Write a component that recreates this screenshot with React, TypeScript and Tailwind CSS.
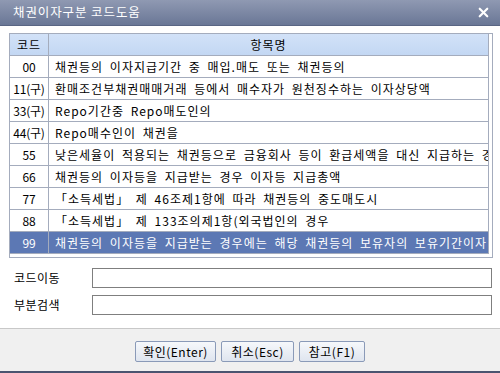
import { X } from 'lucide-react'

const rows = [
  { code: '00', name: '채권등의 이자지급기간 중 매입.매도 또는 채권등의' },
  { code: '11(구)', name: '환매조건부채권매매거래 등에서 매수자가 원천징수하는 이자상당액' },
  { code: '33(구)', name: 'Repo기간중 Repo매도인의' },
  { code: '44(구)', name: 'Repo매수인이 채권을' },
  { code: '55', name: '낮은세율이 적용되는 채권등으로 금융회사 등이 환급세액을 대신 지급하는 경우' },
  { code: '66', name: '채권등의 이자등을 지급받는 경우 이자등 지급총액' },
  { code: '77', name: '「소득세법」 제 46조제1항에 따라 채권등의 중도매도시' },
  { code: '88', name: '「소득세법」 제 133조의제1항(외국법인의 경우' },
  { code: '99', name: '채권등의 이자등을 지급받는 경우에는 해당 채권등의 보유자의 보유기간이자' },
]

const font = { fontFamily: '"Noto Sans CJK KR", "Liberation Sans", sans-serif' }

export default function App() {
  const selected = '99'

  return (
    <div className="w-[500px] h-[373px] bg-white flex flex-col text-[12px] text-black overflow-hidden" style={font}>
      {/* Title bar */}
      <div className="h-[26px] shrink-0 flex items-center justify-between pl-[13px] pr-[9px] bg-gradient-to-b from-[#8f99b2] to-[#6a7796] border-b border-[#5a6684]">
        <span className="text-white text-[12.5px] tracking-[0.9px] leading-none">채권이자구분 코드도움</span>
        <X className="w-[15px] h-[15px] text-white" strokeWidth={3.5} />
      </div>

      {/* Grid */}
      <div className="mt-[7px] ml-[9px] mr-[7px] h-[225px] border border-[#a4acbd] flex flex-col">
        <div className="flex h-[22px] shrink-0 bg-gradient-to-b from-[#d2e2f8] to-[#c3d7f3] border-b border-[#a4acbd] mr-[3px] border-r border-r-[#a4acbd] tracking-[1px]">
          <div className="w-[39px] border-r border-[#a4acbd] flex items-center justify-center">코드</div>
          <div className="flex-1 flex items-center justify-center">항목명</div>
        </div>
        {rows.map((r) => {
          const sel = r.code === selected
          return (
            <div
              key={r.code}
              className={`flex h-[22px] shrink-0 border-b border-[#a4acbd] mr-[3px] border-r border-r-[#a4acbd] ${
                sel ? 'bg-[#5c78b4] text-white' : ''
              }`}
            >
              <div className="w-[39px] border-r border-[#a4acbd] flex items-center justify-center whitespace-nowrap tracking-[-0.2px]">
                {r.code}
              </div>
              <div className="flex-1 flex items-center pl-[6px] whitespace-nowrap overflow-hidden tracking-[1px] [word-spacing:3px]">
                {r.name}
              </div>
            </div>
          )
        })}
      </div>

      {/* Search fields */}
      <div className="flex flex-col gap-[7px] mt-[10px] pl-[14px] pr-[8px]">
        <div className="flex items-center h-[20px]">
          <span className="w-[78px] tracking-[0.5px]">코드이동</span>
          <div className="flex-1 h-[20px] border border-[#7f7f7f] bg-white" />
        </div>
        <div className="flex items-center h-[20px]">
          <span className="w-[78px] tracking-[0.5px]">부분검색</span>
          <div className="flex-1 h-[20px] border border-[#7f7f7f] bg-white" />
        </div>
      </div>

      {/* Footer */}
      <div className="mt-[13px] flex-1 bg-[#f0f0f0] border-t border-[#c8c8c8] border-b-2 border-b-[#4a5470] flex items-start justify-center gap-[5px] pt-[12px] tracking-[0.5px]">
        <button className="h-[21px] w-[81px] border border-[#8a9ab8] rounded-[2px] bg-gradient-to-b from-[#f6f8fb] to-[#dfe5ef]">확인(Enter)</button>
        <button className="h-[21px] w-[73px] border border-[#8a9ab8] rounded-[2px] bg-gradient-to-b from-[#f6f8fb] to-[#dfe5ef]">취소(Esc)</button>
        <button className="h-[21px] w-[66px] border border-[#8a9ab8] rounded-[2px] bg-gradient-to-b from-[#f6f8fb] to-[#dfe5ef]">참고(F1)</button>
      </div>
    </div>
  )
}
